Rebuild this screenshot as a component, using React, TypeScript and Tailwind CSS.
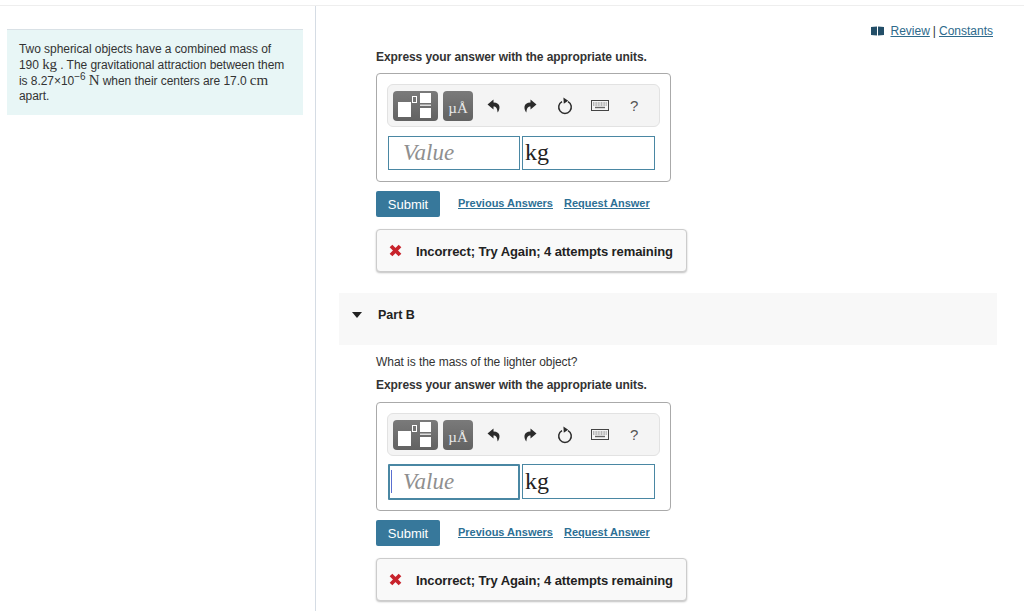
import type { ReactNode } from "react";

const Serif = ({ children }: { children: ReactNode }) => (
  <span className="font-['Liberation_Serif',serif] text-[15px] leading-none">{children}</span>
);

const TemplatesIcon = () => (
  <svg width="36" height="26" viewBox="0 0 36 26">
    <rect x="0" y="9" width="13" height="15" fill="#fff" />
    <rect x="14.5" y="3.5" width="4" height="6" fill="none" stroke="#fff" strokeWidth="1" />
    <rect x="22" y="0" width="11" height="10" fill="#fff" />
    <rect x="22" y="11.5" width="11" height="1.5" fill="#ddd" />
    <rect x="22" y="15" width="11" height="10" fill="#fff" />
  </svg>
);

const UndoIcon = ({ flip }: { flip?: boolean }) => (
  <svg width="14" height="14" viewBox="0 0 14 14" className={flip ? "-scale-x-100" : ""}>
    <path
      d="M6.5 0.5 L0.5 5.5 L6.5 10.5 L6.5 7.6 C9 7.6 10.2 9 10.6 13.5 C13.4 10 14 3.6 6.5 3.4 Z"
      fill="#2b2b2b"
    />
  </svg>
);

const ResetIcon = () => (
  <svg width="16" height="18" viewBox="0 0 16 18" fill="none">
    <path d="M5 4.6 A6.3 6.3 0 1 0 11 4.6" stroke="#2b2b2b" strokeWidth="1.5" />
    <path d="M6.4 0.6 L11.2 3.8 L6.8 6.8 Z" fill="#2b2b2b" />
  </svg>
);

const KeyboardIcon = () => (
  <svg width="18" height="11" viewBox="0 0 18 11" fill="none">
    <rect x="0.5" y="0.5" width="17" height="10" fill="#f4f4f4" stroke="#444" />
    <path d="M2 3 H16 M2 5 H16" stroke="#777" strokeWidth="1" strokeDasharray="1 0.6" />
    <path d="M4 7.5 H14" stroke="#666" strokeWidth="1.4" />
  </svg>
);

const BookIcon = () => (
  <svg width="13" height="10" viewBox="0 0 13 10">
    <path d="M0 1 L6 0.5 V9.5 L0 9 Z" fill="#234e68" />
    <path d="M13 1 L7 0.5 V9.5 L13 9 Z" fill="#234e68" />
  </svg>
);

const CrossIcon = () => (
  <svg width="13" height="13" viewBox="0 0 13 13">
    <path d="M2 2 L11 11 M11 2 L2 11" stroke="#c8232c" strokeWidth="3.8" />
  </svg>
);

const AnswerBlock = ({ focused }: { focused?: boolean }) => (
  <div className="h-[109px] w-[295px] rounded-[4px] border border-[#aaaaaa] pt-[10px] pl-[10px]">
    <div className="flex h-[43px] w-[273px] items-center rounded-[6px] border border-[#e2e2e2] bg-[#f4f4f4] pl-[5px]">
      <div className="flex h-[30px] w-[45px] items-center justify-center rounded-[4px] bg-gradient-to-b from-[#7a7a7a] to-[#626262]">
        <TemplatesIcon />
      </div>
      <div className="ml-[5px] flex h-[30px] w-[30px] items-end justify-center rounded-[4px] bg-gradient-to-b from-[#7a7a7a] to-[#626262] pb-[5px] font-['Liberation_Serif',serif] text-[15px] leading-none text-[#e8e8e8]">
        µÅ
      </div>
      <div className="ml-[14px] flex w-[14px] justify-center">
        <UndoIcon />
      </div>
      <div className="ml-[22px] flex w-[14px] justify-center">
        <UndoIcon flip />
      </div>
      <div className="ml-[20px] flex w-[16px] justify-center">
        <ResetIcon />
      </div>
      <div className="ml-[18px] flex w-[18px] justify-center">
        <KeyboardIcon />
      </div>
      <span className="ml-[21px] text-[15px] leading-none text-[#555]">?</span>
    </div>
    <div className={focused ? "mt-[8px] ml-[1px] flex gap-[2px]" : "mt-[9px] ml-[1px] flex gap-[2px]"}>
      <div
        className={
          focused
            ? "relative flex h-[36px] w-[132px] items-center rounded-[1px] border-2 border-[#4a87a3] pl-[13px]"
            : "flex h-[34px] w-[132px] items-center border border-[#4a87a3] pl-[14px]"
        }
      >
        {focused && <span className="absolute top-[4px] left-[1px] h-[23px] w-px bg-[#5a6fd0]" />}
        <span className="font-['Liberation_Serif',serif] text-[23px] italic text-[#8f8f8f]">Value</span>
      </div>
      <div
        className={
          focused
            ? "flex h-[35px] w-[133px] items-center border border-[#4a87a3] pb-[2px] pl-[2px]"
            : "flex h-[34px] w-[133px] items-center border border-[#4a87a3] pb-[2px] pl-[2px]"
        }
      >
        <span className="font-['Liberation_Serif',serif] text-[24px] text-[#222]">kg</span>
      </div>
    </div>
  </div>
);

const SubmitRow = () => (
  <div className="flex items-center">
    <button className="h-[26px] w-[64px] rounded-[2px] bg-[#37789b] pt-[2px] text-[13px] text-white">Submit</button>
    <a className="mb-[2px] ml-[18px] text-[11px] font-bold text-[#2d7095] underline">Previous Answers</a>
    <a className="mb-[2px] ml-[11px] text-[11px] font-bold text-[#2d7095] underline">Request Answer</a>
  </div>
);

const Feedback = () => (
  <div className="flex h-[43px] w-[311px] items-center rounded-[4px] border border-[#cccccc] bg-[#f9f9f9] pl-[12px] shadow-[0_1px_2px_rgba(0,0,0,0.25)]">
    <CrossIcon />
    <span className="ml-[14px] pt-[2px] text-[13px] font-bold tracking-[-0.1px] whitespace-nowrap text-[#222]">
      Incorrect; Try Again; 4 attempts remaining
    </span>
  </div>
);

export default function App() {
  return (
    <div className="h-[611px] w-[1024px] overflow-hidden bg-white pt-[5px] font-['Liberation_Sans',Arial,sans-serif] text-[#333]">
      <div className="flex h-full border-t border-[#eeeeee]">
        {/* Left panel */}
        <div className="w-[316px] shrink-0 border-r border-[#d5dce4] pt-[23px] pl-[7px]">
          <div className="h-[86px] w-[296px] border-t border-[#d9e1e6] bg-[#e8f6f6] pt-[12px] pl-[12px] text-[12px] tracking-[-0.06px] text-[#333]">
            <p className="h-[15px] leading-[15px]">Two spherical objects have a combined mass of</p>
            <p className="h-[16px] leading-[15px]">
              190 <Serif>kg</Serif> . The gravitational attraction between them
            </p>
            <p className="h-[16px] leading-[15px]">
              is 8.27×10<sup className="text-[10px] leading-none">−6</sup> <Serif>N</Serif> when their centers are
              17.0 <Serif>cm</Serif>
            </p>
            <p className="h-[15px] leading-[15px]">apart.</p>
          </div>
        </div>

        {/* Right panel */}
        <div className="flex-1 pl-[23px]">
          <div className="mt-[17px] flex h-[16px] w-[654px] items-center justify-end text-[12px] text-[#2d6a8c]">
            <BookIcon />
            <a className="ml-[6px] underline">Review</a>
            <span className="mx-[3px] text-[#333]">|</span>
            <a className="underline">Constants</a>
          </div>

          <div className="pl-[37px]">
            <p className="mt-[11px] text-[12px] leading-[15px] font-bold tracking-[-0.07px] text-[#333]">
              Express your answer with the appropriate units.
            </p>
            <div className="mt-[8px]">
              <AnswerBlock />
            </div>
            <div className="mt-[9px]">
              <SubmitRow />
            </div>
            <div className="mt-[12px]">
              <Feedback />
            </div>
          </div>

          <div className="mt-[21px] flex h-[52px] w-[658px] items-center bg-[#f8f8f8] pb-[8px] pl-[13px]">
            <span className="h-0 w-0 border-x-[5px] border-t-[6px] border-x-transparent border-t-[#222]" />
            <span className="ml-[16px] text-[12.5px] font-bold text-[#222]">Part B</span>
          </div>

          <div className="pl-[37px]">
            <p className="mt-[10px] text-[12px] leading-[15px] tracking-[-0.05px] text-[#333]">
              What is the mass of the lighter object?
            </p>
            <p className="mt-[8px] text-[12px] leading-[15px] font-bold tracking-[-0.07px] text-[#333]">
              Express your answer with the appropriate units.
            </p>
            <div className="mt-[9px]">
              <AnswerBlock focused />
            </div>
            <div className="mt-[9px]">
              <SubmitRow />
            </div>
            <div className="mt-[12px]">
              <Feedback />
            </div>
          </div>
        </div>
      </div>
    </div>
  );
}
